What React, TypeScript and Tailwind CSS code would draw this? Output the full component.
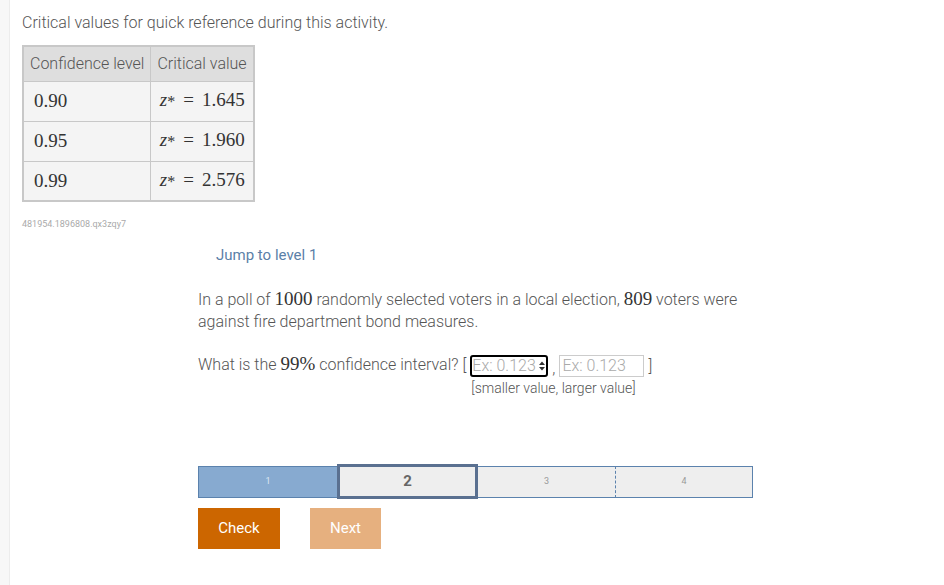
const rows = [
  { level: "0.90", value: "1.645" },
  { level: "0.95", value: "1.960" },
  { level: "0.99", value: "2.576" },
]

const math = { fontFamily: '"Liberation Serif", "DejaVu Serif", serif' }

function ZStar({ value }: { value: string }) {
  return (
    <span style={math} className="text-[19px] text-[#333] leading-none">
      <i>z</i>
      <sup className="text-[16px] relative top-[1px]">*</sup>
      <span className="mx-[8px]">=</span>
      {value}
    </span>
  )
}

function Spinner() {
  return (
    <svg width="8" height="12" viewBox="0 0 8 12" className="ml-[2px]">
      <path d="M1 5 L4 1.5 L7 5 Z" fill="#333" />
      <path d="M1 7 L4 10.5 L7 7 Z" fill="#333" />
    </svg>
  )
}

function Num({ children }: { children: string }) {
  return (
    <span style={math} className="text-[19px] leading-[18px] text-[#333]">
      {children}
    </span>
  )
}

function ProgressBar() {
  return (
    <div className="flex h-[32px] w-[555px] mt-[69px]">
      <div className="w-[139px] bg-[#87aad0] border border-[#5b82ad] border-r-0 flex items-center justify-center text-[9px] text-[#dde6f0]">
        1
      </div>
      <div className="w-[141px] h-[35px] -mt-[2px] bg-[#eeeeee] border-[3px] border-[#5a7090] flex items-center justify-center text-[15px] font-bold text-[#666] relative z-10">
        2
      </div>
      <div
        className="w-[138px] bg-[#eeeeee] border-y border-r border-[#5b82ad] border-dashed flex items-center justify-center text-[9px] text-[#999]"
        style={{ borderTopStyle: "solid", borderBottomStyle: "solid" }}>
        3
      </div>
      <div className="flex-1 bg-[#eeeeee] border-y border-r border-[#5b82ad] flex items-center justify-center text-[9px] text-[#999]">
        4
      </div>
    </div>
  )
}

export default function App() {
  return (
    <div
      className="flex min-h-[585px] bg-white text-[#555]"
      style={{ fontFamily: 'Roboto, "Noto Sans", sans-serif' }}>
      <div className="w-[10px] shrink-0 bg-[#f7f7f7] border-r border-[#ececec]" />
      <div className="flex-1 pl-[12px]">
        <p className="mt-[12px] text-[16px] font-light leading-[22px]">
          Critical values for quick reference during this activity.
        </p>

        <table className="mt-[11px] border-2 border-[#c8c8c8] border-collapse">
          <thead>
            <tr className="bg-[#dedede] h-[35px]">
              <th className="border border-[#c8c8c8] px-[6px] text-left text-[16px] font-light text-[#555]">
                Confidence level
              </th>
              <th className="border border-[#c8c8c8] px-[6px] text-left text-[16px] font-light text-[#555]">
                Critical value
              </th>
            </tr>
          </thead>
          <tbody>
            {rows.map((r) => (
              <tr key={r.level} className="bg-[#f4f4f4] h-[40px]">
                <td
                  style={math}
                  className="border border-[#c8c8c8] pl-[10px] text-[19px] text-[#333]">
                  {r.level}
                </td>
                <td className="border border-[#c8c8c8] px-[8px] text-right">
                  <ZStar value={r.value} />
                </td>
              </tr>
            ))}
          </tbody>
        </table>

        <p className="mt-[16px] text-[9px] text-[#aaa]">481954.1896808.qx3zqy7</p>

        <div className="ml-[176px] w-[560px]">
          <p className="mt-[12px] ml-[18px] text-[15px] text-[#5b7fa8]">Jump to level 1</p>

          <p className="mt-[23px] w-[548px] text-[16px] font-light leading-[22px]">
            In a poll of <Num>1000</Num> randomly selected voters in a local election,{" "}
            <Num>809</Num> voters were against fire department bond measures.
          </p>

          <div className="mt-[21px] flex items-start text-[16px] font-light">
            <span className="leading-[22px]">
              What is the <Num>99%</Num> confidence interval? [
            </span>
            <div className="flex flex-col">
              <div className="flex items-center">
                <div className="ml-[4px] h-[22px] w-[78px] border-2 border-black rounded-[3px] flex items-center text-[#aaa] leading-none">
                  <span>Ex: 0.123</span>
                  <Spinner />
                </div>
                <span className="mx-[4px] self-end leading-[18px]">,</span>
                <div className="h-[22px] w-[85px] border border-[#ccc] flex items-center pl-[2px] text-[#aaa] leading-none">
                  Ex: 0.123
                </div>
                <span className="ml-[4px]">]</span>
              </div>
              <span className="mt-[1px] ml-[5px] text-[14px] leading-[18px]">[smaller value, larger value]</span>
            </div>
          </div>
        </div>

        <div className="ml-[176px]">
          <ProgressBar />
          <div className="mt-[10px] flex gap-[30px]">
            <button className="h-[41px] w-[82px] bg-[#cc6600] text-white text-[15px]">Check</button>
            <button className="h-[41px] w-[71px] bg-[#e6b07f] text-white text-[15px]">Next</button>
          </div>
        </div>
      </div>
    </div>
  )
}
